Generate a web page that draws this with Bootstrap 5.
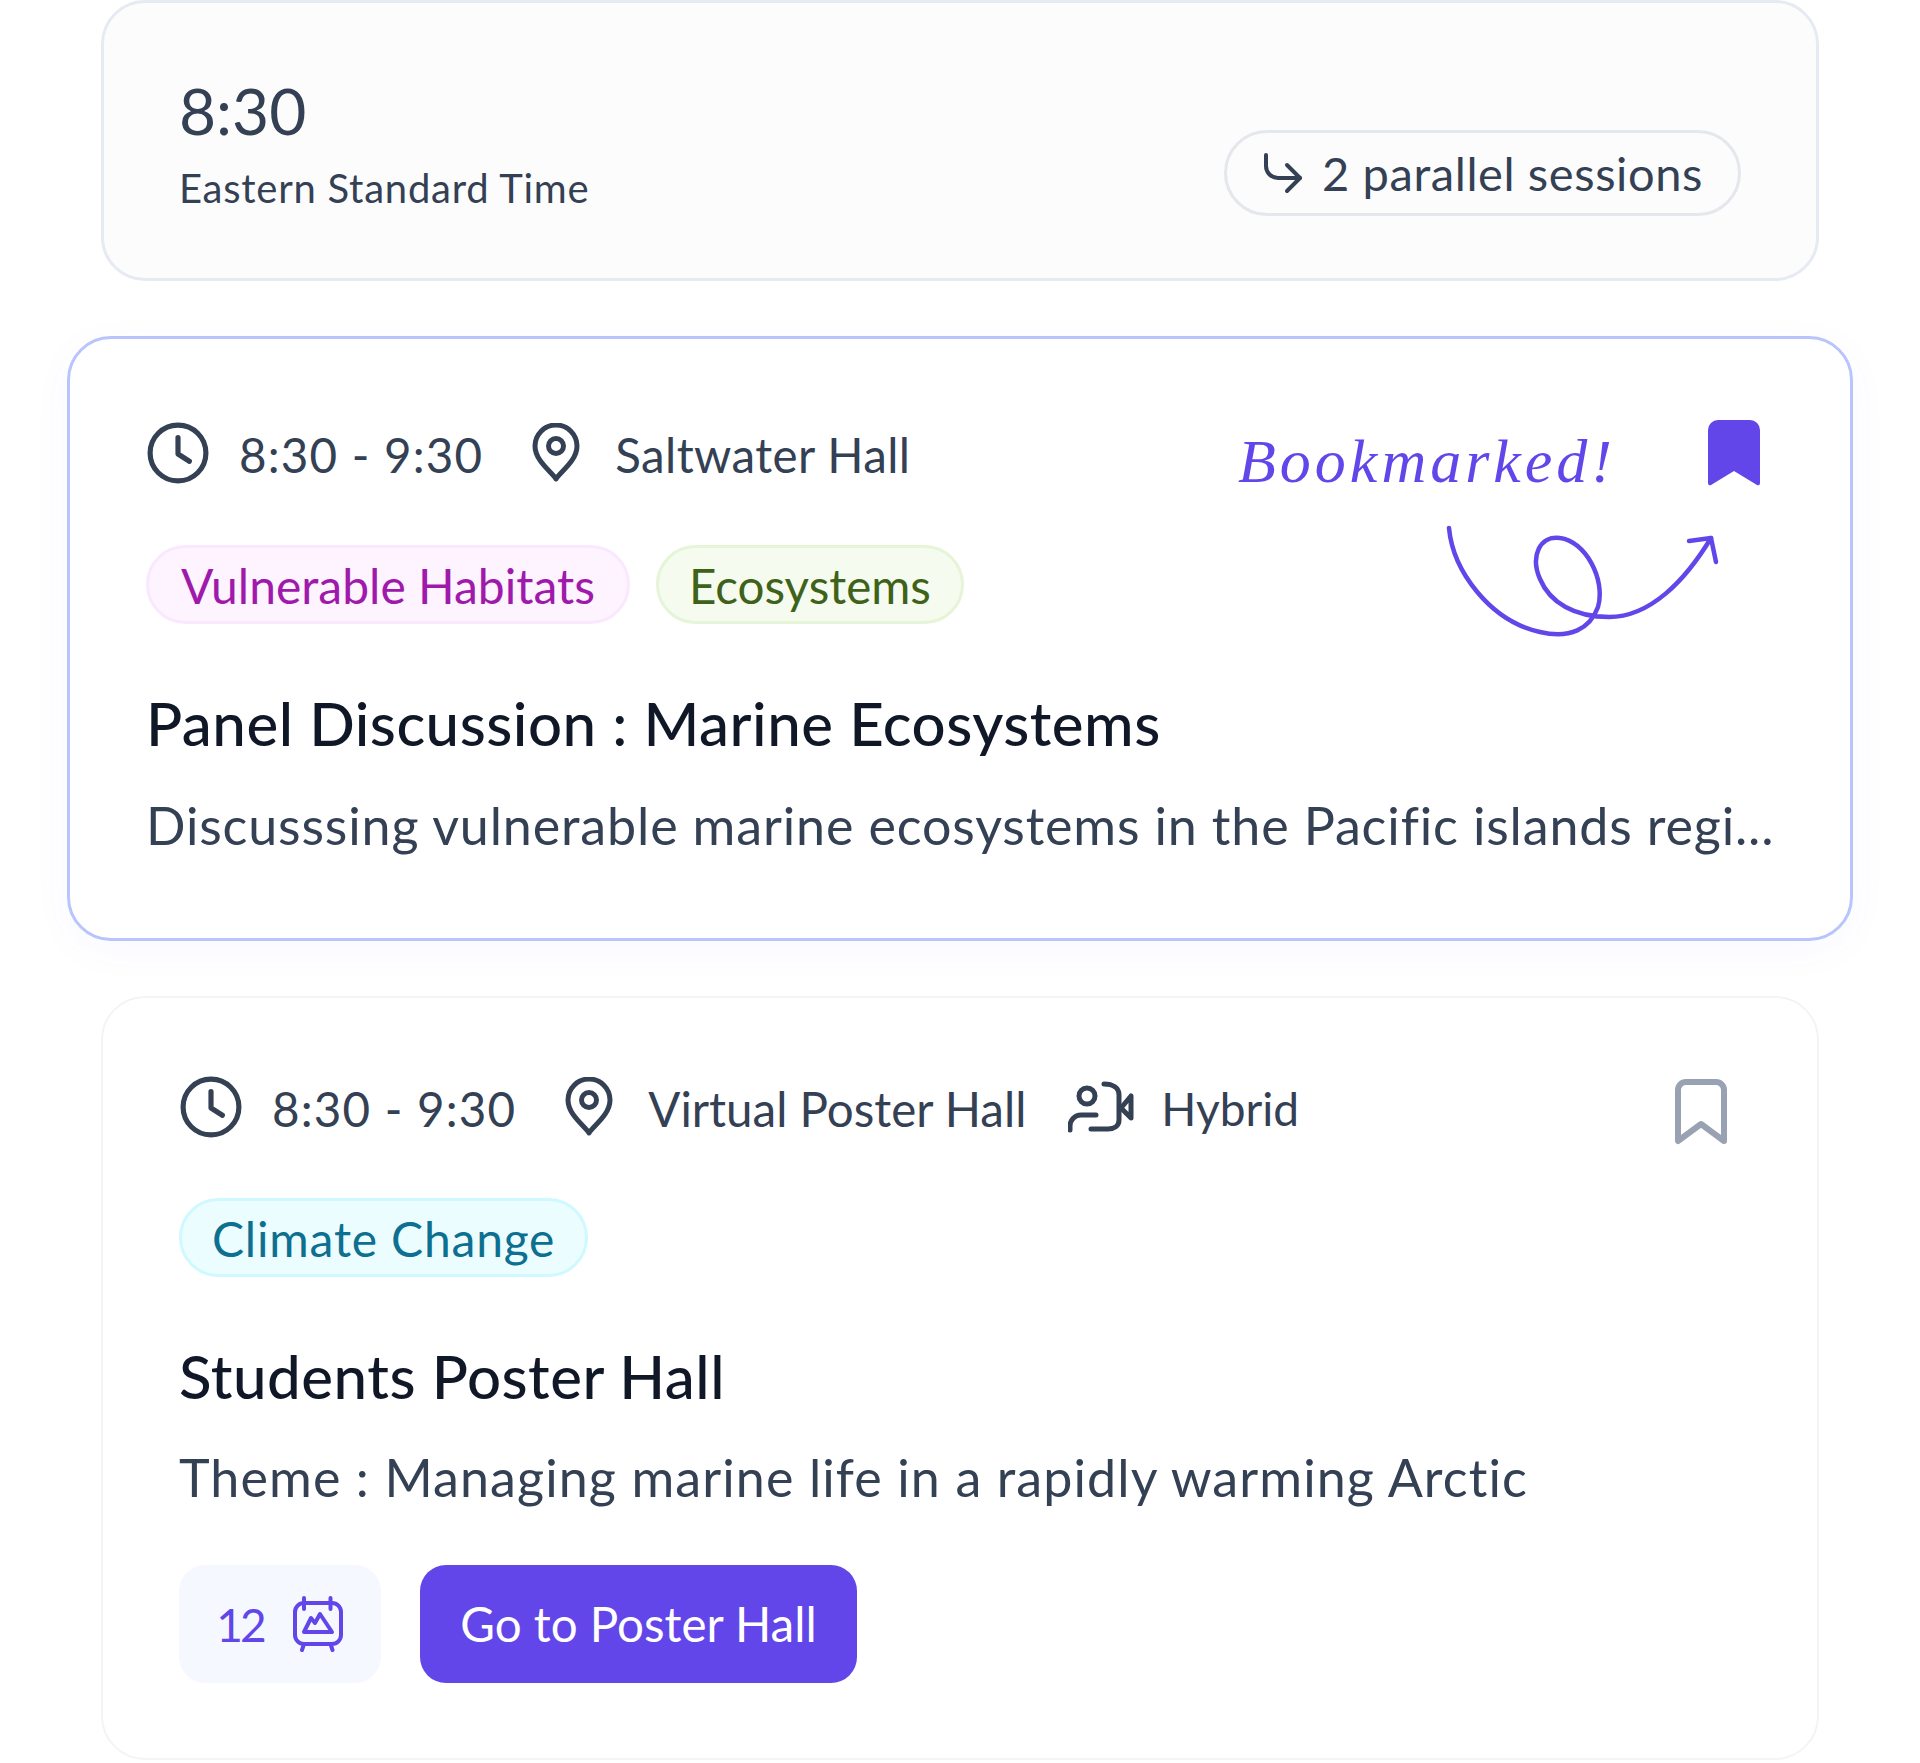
<!DOCTYPE html>
<html lang="en">
<head>
  <meta charset="UTF-8" />
  <meta name="viewport" content="width=device-width, initial-scale=1.0"/>
  <title>Sessions</title>
  <link href="https://cdn.jsdelivr.net/npm/bootstrap@5.3.0/dist/css/bootstrap.min.css" rel="stylesheet">
  <style>
    body {
      background-color: #fff;
      color: #344054;
      font-family: "Lato", "Liberation Sans", sans-serif;
    }
    .page-wrap {
      padding: 0 101px;
    }
    .slot-card {
      border: 2px solid #f2f4f7;
      border-radius: 44px;
      background-color: #fff;
      padding: 76px 76px;
    }
    .slot-head {
      background-color: #fcfcfd;
      border: 3px solid #e6eaf2;
      height: 281px;
      padding: 77px 75px 0;
      margin-bottom: 55px;
    }
    .slot-marked {
      position: relative;
      height: 605px;
      margin: 0 -34px 55px;
      padding: 84px 76px 0;
      border: 3px solid #b9c4fc;
      box-shadow: 0 10px 40px rgba(98, 70, 234, 0.04);
    }
    .slot-last {
      height: 764px;
      padding-top: 79px;
    }
    .time-big {
      font-size: 64px;
      line-height: 62px;
      margin-bottom: 23px;
    }
    .time-zone {
      font-size: 40px;
      line-height: 46px;
      letter-spacing: 0.75px;
    }
    .parallel-pill {
      height: 86px;
      width: 517px;
      margin-top: -12px;
      border: 3px solid #e4e7ec;
      border-radius: 43px;
      padding-left: 35px;
      font-size: 47px;
      letter-spacing: 0.6px;
      gap: 18px;
    }
    .meta-row {
      height: 60px;
      font-size: 47.5px;
      line-height: 60px;
    }
    .meta-row span { padding-top: 3px; }
    .meta-clock { margin-left: 1px; flex-shrink: 0; }
    .meta-time { letter-spacing: 1.2px; margin-left: 30px; margin-right: 48px; }
    .meta-place { margin-left: 34px; }
    .meta-wide { letter-spacing: 0.4px; }
    .meta-hybrid-icon { margin-left: 42px; }
    .meta-hybrid { margin-left: 27px; font-size: 46px; }
    .topic-tag {
      display: inline-flex;
      align-items: center;
      height: 79px;
      padding: 3px 32px 0;
      border-radius: 40px;
      border: 3px solid;
      font-size: 48px;
    }
    .tag-pink { background-color: #fdf4ff; border-color: #fae8ff; color: #9f1aab; }
    .tag-green { background-color: #f5fbee; border-color: #e6f4d7; color: #3f621a; font-size: 47.5px; padding: 3px 30px 0; }
    .tag-cyan { background-color: #ecfdff; border-color: #cff9fe; color: #0e7090; letter-spacing: 0.8px; padding: 3px 30px 0; }
    .tag-row {
      margin-top: 62px;
      gap: 26px;
    }
    .slot-last .tag-row { margin-top: 61px; }
    .talk-title {
      margin: 64px 0 0;
      font-size: 60px;
      line-height: 70px;
      font-weight: 500;
      letter-spacing: 0.5px;
      color: #101828;
      white-space: nowrap;
    }
    .talk-desc {
      margin: 32px 0 0;
      font-size: 52px;
      line-height: 70px;
      letter-spacing: 0.85px;
      white-space: nowrap;
    }
    .slot-last .talk-desc { margin-top: 31px; letter-spacing: 1.1px; }
    .action-row {
      margin-top: 53px;
      gap: 39px;
    }
    .poster-count {
      width: 202px;
      height: 118px;
      border-radius: 26px;
      background-color: #f5f8ff;
      color: #6246ea;
      font-size: 46px;
      letter-spacing: -3px;
      gap: 28px;
    }
    .btn.hall-btn {
      height: 118px;
      width: 437px;
      border: none;
      border-radius: 26px;
      background-color: #6246ea;
      color: #fff;
      font-size: 47.5px;
      line-height: 118px;
      padding: 0;
    }
    .bookmark-slot {
      margin-left: auto;
      margin-right: 14px;
    }
    .slot-last .bookmark-slot { margin-top: 10px; }
    .note-text {
      position: absolute;
      left: 1168px;
      top: 82px;
      font-family: "Liberation Serif", serif;
      font-style: italic;
      font-size: 62px;
      line-height: 80px;
      letter-spacing: 4px;
      color: #6246ea;
      white-space: nowrap;
    }
    .note-arrow {
      position: absolute;
      left: 1366px;
      top: 178px;
    }
  </style>
</head>
<body>
  <div class="page-wrap">

    <div class="slot-card slot-head d-flex justify-content-between align-items-center">
      <div class="align-self-start">
        <div class="time-big">8:30</div>
        <div class="time-zone">Eastern Standard Time</div>
      </div>
      <div class="parallel-pill d-flex align-items-center">
        <svg width="42" height="42" viewBox="0 0 42 42" fill="none" stroke="#344054" stroke-width="4" stroke-linecap="round" stroke-linejoin="round"><path d="M4 3V14a12 12 0 0 0 12 12H38"/><path d="M25 13L38 26L25 39"/></svg>
        <span>2 parallel sessions</span>
      </div>
    </div>

    <div class="slot-card slot-marked">
      <div class="meta-row d-flex align-items-center">
        <svg class="meta-clock" width="62" height="62" viewBox="0 0 60 60" fill="none" stroke="#344054" stroke-width="5" stroke-linecap="round" stroke-linejoin="round"><circle cx="30" cy="30" r="27"/><path d="M30 15V31L41 38"/></svg>
        <span class="meta-time">8:30 - 9:30</span>
        <svg width="50" height="60" viewBox="0 0 50 60" fill="none" stroke="#344054" stroke-width="5" stroke-linejoin="round"><path d="M25 56C21 49 4 38 4 23A21 21 0 0 1 46 23C46 38 29 49 25 56Z"/><circle cx="25" cy="23" r="7.5"/></svg>
        <span class="meta-place meta-wide">Saltwater Hall</span>
        <svg class="bookmark-slot" width="52" height="66" viewBox="0 0 52 66" fill="#6246ea"><path d="M0 10A10 10 0 0 1 10 0H42A10 10 0 0 1 52 10V63Q52 66 49 65L26 51L3 65Q0 66 0 63Z"/></svg>
      </div>
      <div class="tag-row d-flex">
        <span class="topic-tag tag-pink">Vulnerable Habitats</span>
        <span class="topic-tag tag-green">Ecosystems</span>
      </div>
      <h5 class="talk-title">Panel Discussion : Marine Ecosystems</h5>
      <p class="talk-desc">Discusssing vulnerable marine ecosystems in the Pacific islands regi...</p>

      <div class="note-text">Bookmarked!</div>
      <svg class="note-arrow" width="300" height="130" viewBox="1436 516 300 130" fill="none" stroke="#6246ea" stroke-width="4.500" stroke-linecap="round" stroke-linejoin="round">
        <path d="M1449 527C1453 570 1490 620 1540 631C1570 638 1590 628 1598 606C1606 578 1585 540 1560 537C1540 534 1530 555 1540 578C1550 602 1575 616 1609 616C1650 616 1685 580 1711 537"/>
        <path d="M1689 540L1711 537L1716 561"/>
      </svg>
    </div>

    <div class="slot-card slot-last">
      <div class="meta-row d-flex align-items-center">
        <svg class="meta-clock" width="62" height="62" viewBox="0 0 60 60" fill="none" stroke="#344054" stroke-width="5" stroke-linecap="round" stroke-linejoin="round"><circle cx="30" cy="30" r="27"/><path d="M30 15V31L41 38"/></svg>
        <span class="meta-time">8:30 - 9:30</span>
        <svg width="50" height="60" viewBox="0 0 50 60" fill="none" stroke="#344054" stroke-width="5" stroke-linejoin="round"><path d="M25 56C21 49 4 38 4 23A21 21 0 0 1 46 23C46 38 29 49 25 56Z"/><circle cx="25" cy="23" r="7.5"/></svg>
        <span class="meta-place">Virtual Poster Hall</span>
        <svg class="meta-hybrid-icon" width="66" height="56" viewBox="0 0 66 56" fill="none" stroke="#344054" stroke-width="5" stroke-linecap="round" stroke-linejoin="round"><circle cx="19" cy="17" r="8"/><path d="M2 51V47A11 11 0 0 1 13 36H28"/><path d="M36 5C45 5 51 9 51 16V41C51 47 46 50 40 50H23"/><path d="M53 29L63 17V39Z"/></svg>
        <span class="meta-hybrid">Hybrid</span>
        <svg class="bookmark-slot" width="52" height="66" viewBox="0 0 52 66" fill="none" stroke="#98a2b3" stroke-width="6" stroke-linejoin="round"><path d="M3 11A8 8 0 0 1 11 3H41A8 8 0 0 1 49 11V62L26 45L3 62Z"/></svg>
      </div>
      <div class="tag-row d-flex">
        <span class="topic-tag tag-cyan">Climate Change</span>
      </div>
      <h5 class="talk-title">Students Poster Hall</h5>
      <p class="talk-desc">Theme : Managing marine life in a rapidly warming Arctic</p>
      <div class="action-row d-flex">
        <div class="poster-count d-flex align-items-center justify-content-center">
          <span>12</span>
          <svg width="52" height="56" viewBox="0 0 52 56" fill="none" stroke="#6246ea" stroke-width="4" stroke-linecap="round" stroke-linejoin="round"><rect x="3" y="7" width="46" height="41" rx="9"/><path d="M12 2V13M38.500 2V13M12 48L10 54M38.500 48L40.500 54"/><path d="M12 36L19 22L23 27L28 18L40 36Z"/></svg>
        </div>
        <a class="btn hall-btn" href="#">Go to Poster Hall</a>
      </div>
    </div>

  </div>
  <script src="https://cdn.jsdelivr.net/npm/bootstrap@5.3.0/dist/js/bootstrap.bundle.min.js"></script>
</body>
</html>
